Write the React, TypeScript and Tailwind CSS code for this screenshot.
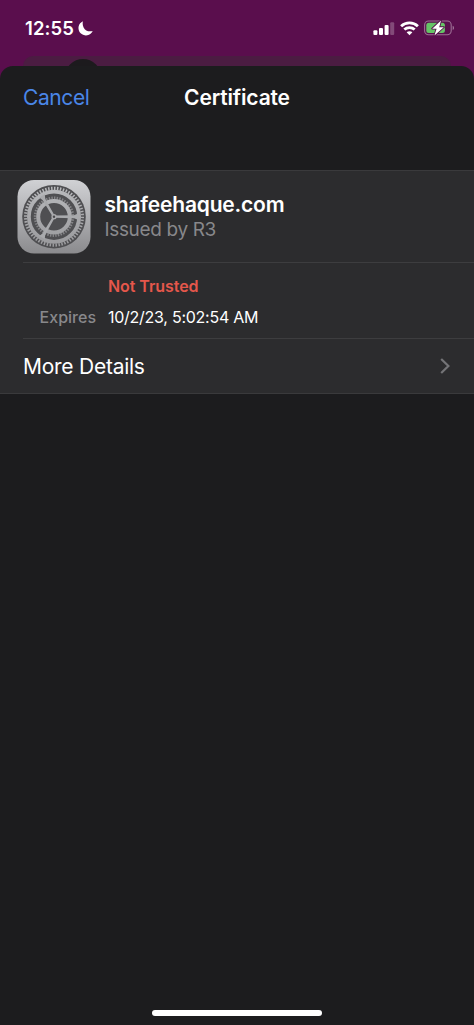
import React from "react";

function StatusBar() {
  return (
    <div className="flex h-14 items-start justify-between pl-[25px] pr-[19px] pt-[17px] text-white">
      <div className="flex items-center gap-[4px]">
        <span className="text-[18.5px] font-semibold leading-[23px] tracking-[0.1px]">12:55</span>
        <svg width="15" height="15" viewBox="0 0 15 15" fill="currentColor">
          <path d="M5 0.2A7.4 7.4 0 1 0 14.7 9.9C11 11.1 7.2 9.6 5.6 6.4C4.6 4.3 4.4 2.1 5 0.2Z" />
        </svg>
      </div>
      <div className="flex items-center gap-[5px] pt-[3px]">
        <svg width="22" height="15" viewBox="0 0 22 15" fill="currentColor">
          <rect x="0.4" y="9.2" width="4" height="4.8" rx="1.1" />
          <rect x="6" y="7" width="4" height="7" rx="1.1" />
          <rect x="11.6" y="3.9" width="4" height="10.1" rx="1.1" />
          <rect x="17.2" y="1.2" width="4" height="12.8" rx="1.1" opacity="0.25" />
        </svg>
        <svg width="19" height="15" viewBox="0 0 19 15" fill="none" stroke="currentColor" strokeWidth="2.8">
          <path d="M1.1 5.2C5.8 0.7 13.2 0.7 17.9 5.2" />
          <path d="M4.3 8.6C7.2 5.9 11.8 5.9 14.7 8.6" />
          <path d="M9.5 14.2L6.6 11.3C8.2 9.9 10.8 9.9 12.4 11.3Z" fill="currentColor" stroke="none" />
        </svg>
        <svg width="31" height="17" viewBox="0 0 31 17">
          <rect x="0.6" y="1" width="26.6" height="13.8" rx="4" fill="none" stroke="#fff" strokeOpacity="0.4" strokeWidth="1.1" />
          <path d="M28.7 5.8V10Q30 9.4 30 7.9Q30 6.4 28.7 5.8Z" fill="#fff" fillOpacity="0.45" />
          <rect x="2.3" y="2.7" width="18.6" height="10.4" rx="2.5" fill="#65c466" />
          <path
            d="M17 0.4L8.2 8.7H12.6L10.4 15.6L19.8 7.2H15.2Z"
            fill="#fff"
            stroke="#570f4b"
            strokeWidth="1.8"
            strokeLinejoin="round"
            paintOrder="stroke"
          />
        </svg>
      </div>
    </div>
  );
}

function SettingsIcon() {
  return (
    <svg width="74" height="74" viewBox="0 0 74 74" className="shrink-0">
      <defs>
        <linearGradient id="plate" x1="0" y1="0" x2="0" y2="1">
          <stop offset="0" stopColor="#d0d1d4" />
          <stop offset="1" stopColor="#8b8b8e" />
        </linearGradient>
        <linearGradient id="metal" gradientUnits="userSpaceOnUse" x1="0" y1="6" x2="0" y2="68">
          <stop offset="0" stopColor="#b9babd" />
          <stop offset="1" stopColor="#99999c" />
        </linearGradient>
      </defs>
      <rect x="0.5" y="0" width="73" height="73.5" rx="16.5" fill="url(#plate)" />
      <circle cx="37" cy="36.7" r="31.8" fill="#4f4f52" />
      <g fill="none" stroke="url(#metal)">
        {/* outer gear */}
        <circle cx="37" cy="36.7" r="28.4" strokeWidth="3.2" pathLength="180" strokeDasharray="1.5 1.5" />
        <circle cx="37" cy="36.7" r="25.1" strokeWidth="3.8" />
        {/* inner gear */}
        <circle cx="37" cy="36.7" r="18.9" strokeWidth="2.6" stroke="#858588" pathLength="132" strokeDasharray="1.6 1.4" />
        <circle cx="37" cy="36.7" r="15.8" strokeWidth="4" />
      </g>
      {/* spokes, flared towards the rim */}
      <g fill="#a9aaad">
        <path id="spoke" d="M37 35.6L57 35.2L61 33.6V39.8L57 38.2L37 37.8Z" />
        <use href="#spoke" transform="rotate(120 37 36.7)" />
        <use href="#spoke" transform="rotate(240 37 36.7)" />
      </g>
      <circle cx="37" cy="36.7" r="2.6" fill="#aaaaad" />
      <circle cx="37" cy="36.7" r="1.2" fill="#4a4a4d" />
    </svg>
  );
}

function CertificateCard() {
  return (
    <div className="border-y border-[#3a3a3c] bg-[#2c2c2e]">
      <div className="flex h-[91px] pl-[17px] pt-[9px]">
        <SettingsIcon />
        <div className="pl-[13.5px] pt-[11px]">
          <h2 className="text-[21px] font-semibold leading-[27px] tracking-[-0.2px] text-white">shafeehaque.com</h2>
          <p className="text-[19px] leading-[23px] tracking-[-0.35px] text-[#88888b]">Issued by R3</p>
        </div>
      </div>
      <div className="ml-[23px] h-[77px] border-y border-[#3d3d3f] pt-[12px] text-[16px] leading-[22px]">
        <p className="pl-[85px] font-semibold tracking-[-0.05px] text-[#e5574b]">Not Trusted</p>
        <div className="flex pt-[9px]">
          <span className="w-[73px] text-right font-medium text-[#88888b]">Expires</span>
          <span className="pl-[12px] tracking-[-0.26px] text-white">10/2/23, 5:02:54 AM</span>
        </div>
      </div>
      <button className="flex h-[54px] w-full items-center justify-between pl-[23px] pr-[24px]">
        <span className="pt-[2px] text-[21px] leading-[26px] tracking-[-0.25px] text-white">More Details</span>
        <svg width="10" height="16" viewBox="0 0 10 16" fill="none" stroke="#747477" strokeWidth="2.2">
          <path d="M1.2 1L8.4 8L1.2 15" />
        </svg>
      </button>
    </div>
  );
}

export default function App() {
  return (
    <div className="flex h-[1025px] w-[474px] flex-col overflow-hidden whitespace-nowrap bg-[#5a0e4d] font-[Inter,'Liberation_Sans',sans-serif]">
      <StatusBar />
      {/* edge of the page behind the sheet */}
      <div className="mx-[23px] h-[10px] shrink-0 overflow-hidden rounded-t-[10px] bg-[#4b1c42]">
        <div className="ml-[42px] mt-[3px] h-9 w-9 rounded-full bg-[#1c1a1d]" />
      </div>
      <div className="flex flex-1 flex-col rounded-t-[13px] bg-[#1c1c1e]">
        <header className="grid h-[104px] grid-cols-3 items-start px-[23px] pt-[18px] text-[21px] leading-[27px]">
          <button className="text-left tracking-[-0.4px] text-[#4a86e8]">Cancel</button>
          <h1 className="text-center font-semibold tracking-[-0.15px] text-white">Certificate</h1>
        </header>
        <CertificateCard />
        <div className="mx-auto mb-[9px] mt-auto h-[6px] w-[170px] rounded-full bg-white" />
      </div>
    </div>
  );
}
